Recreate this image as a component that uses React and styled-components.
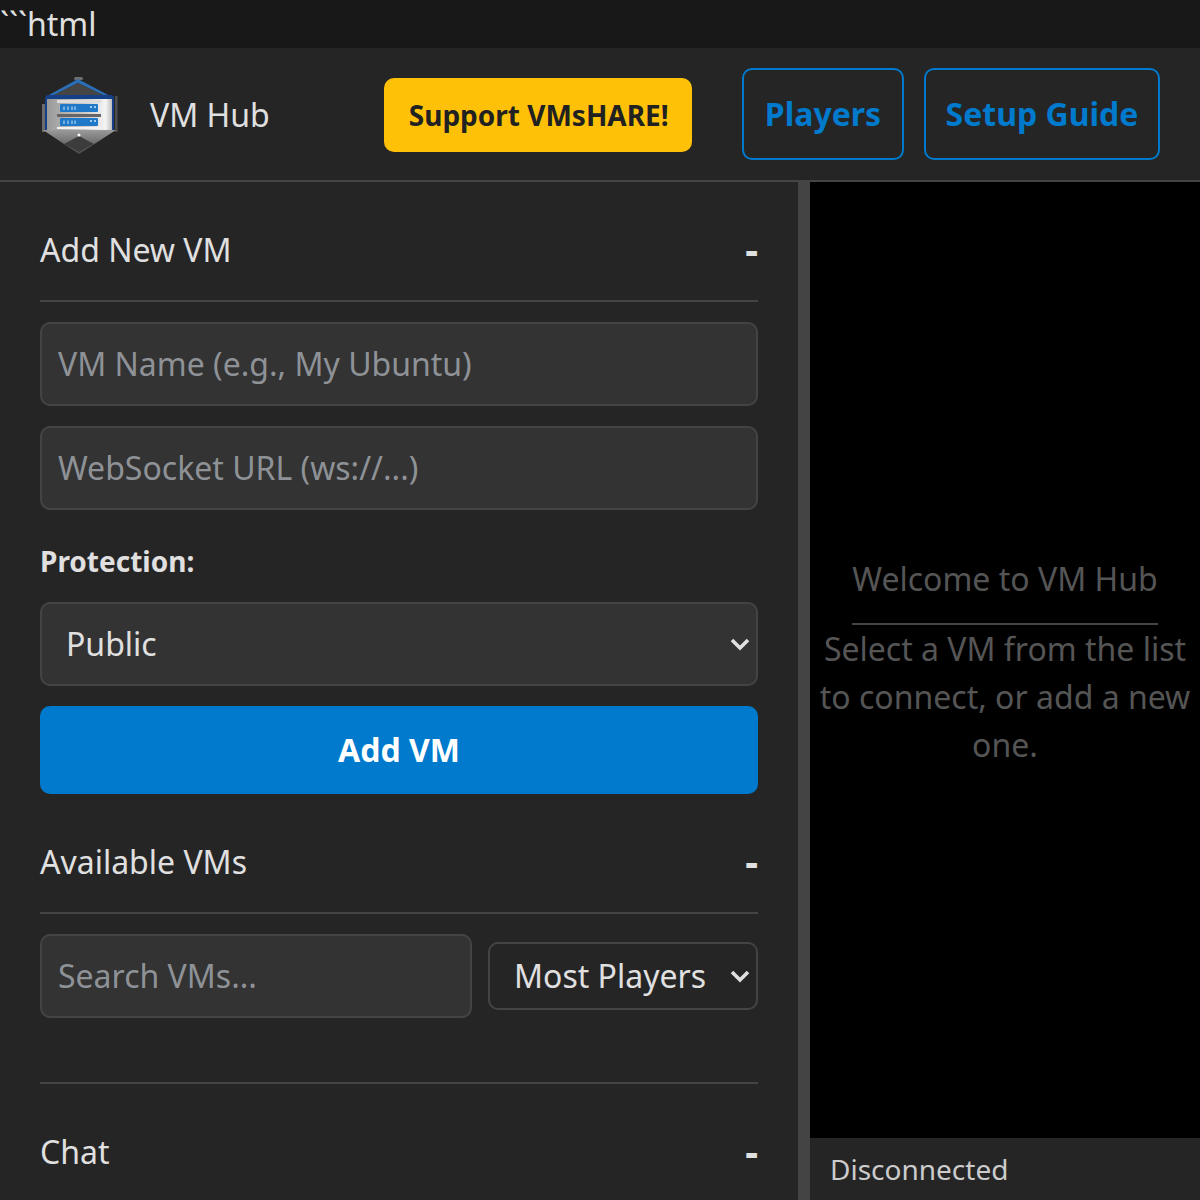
import styled, { createGlobalStyle } from "styled-components";

const GlobalStyle = createGlobalStyle`
  html, body {
    margin: 0;
    height: 100%;
    background: #181818;
  }
  body {
    font-family: "Noto Sans", "Open Sans", sans-serif;
    color: #e0e0e0;
    overflow: hidden;
  }
  * {
    box-sizing: border-box;
  }
`;

const Page = styled.div`
  display: flex;
  flex-direction: column;
  height: 1200px;
  overflow: hidden;
`;

const Stray = styled.div`
  height: 48px;
  font-size: 32px;
  line-height: 48px;
  flex-shrink: 0;
`;

const Header = styled.header`
  display: flex;
  align-items: center;
  height: 134px;
  padding: 0 40px;
  background: #252526;
  border-bottom: 2px solid #444;
  flex-shrink: 0;
`;

const Logo = styled.svg`
  width: 80px;
  height: 80px;
  flex-shrink: 0;
`;

const Title = styled.div`
  margin-left: 30px;
  font-size: 32px;
  color: #e0e0e0;
`;

const SupportButton = styled.a`
  display: flex;
  align-items: center;
  justify-content: center;
  width: 308px;
  height: 74px;
  margin: 2px 0 0 114px;
  padding-left: 2px;
  background: #ffc107;
  color: #212121;
  border-radius: 10px;
  font-size: 28px;
  font-weight: 700;
`;

const Nav = styled.nav`
  display: flex;
  gap: 20px;
  margin-left: auto;
`;

const NavButton = styled.a`
  display: flex;
  align-items: center;
  justify-content: center;
  width: ${(p) => p.$width}px;
  height: 92px;
  padding-bottom: 2px;
  border: 2px solid #007acc;
  border-radius: 10px;
  color: #007acc;
  font-size: 32px;
  font-weight: 700;
`;

const Main = styled.div`
  display: flex;
  flex: 1;
  min-height: 0;
`;

const Sidebar = styled.aside`
  width: 798px;
  padding: 0 40px;
  background: #252526;
  overflow: hidden;
  flex-shrink: 0;
`;

const Resizer = styled.div`
  width: 12px;
  background: #444;
  flex-shrink: 0;
`;

const SectionHead = styled.div`
  display: flex;
  align-items: center;
  justify-content: space-between;
  height: ${(p) => (p.$open ? 120 : 134)}px;
  padding-top: ${(p) => (p.$open ? 16 : 0)}px;
  border-bottom: ${(p) => (p.$open ? "2px solid #444" : "none")};
  font-size: 32px;
`;

const Toggle = styled.span`
  font-size: 40px;
  font-weight: 700;
  line-height: 48px;
`;

const Fields = styled.div`
  display: flex;
  flex-direction: column;
  gap: 20px;
  padding-top: 20px;
`;

const TextInput = styled.input`
  width: 100%;
  height: 84px;
  padding: 0 16px 1px;
  background: #333;
  border: 2px solid #444;
  border-radius: 10px;
  color: #e0e0e0;
  font: inherit;
  font-size: 32px;

  &::placeholder {
    color: #8e9297;
    opacity: 1;
  }
`;

const Label = styled.label`
  display: block;
  height: 37px;
  margin-top: 15px;
  font-size: 28px;
  line-height: 32px;
  font-weight: 700;
`;

const SelectWrap = styled.div`
  position: relative;
  flex: ${(p) => (p.$small ? "0 0 270px" : "none")};
`;

const Select = styled.select`
  display: block;
  width: 100%;
  height: ${(p) => (p.$small ? 68 : 84)}px;
  padding: 0 24px 2px;
  appearance: none;
  background: ${(p) => (p.$small ? "#252526" : "#333")};
  border: 2px solid #444;
  border-radius: 10px;
  color: #e0e0e0;
  font: inherit;
  font-size: 32px;
`;

const Chevron = styled.svg`
  position: absolute;
  top: 50%;
  right: 8px;
  width: 20px;
  height: 14px;
  margin-top: -7px;
  pointer-events: none;
`;

const AddButton = styled.button`
  height: 88px;
  padding-bottom: 3px;
  background: #007acc;
  border: none;
  border-radius: 10px;
  color: #fff;
  font: inherit;
  font-size: 32px;
  font-weight: 700;
`;

const SearchRow = styled.div`
  display: flex;
  align-items: center;
  gap: 16px;
  padding-top: 20px;
  padding-bottom: 64px;
  border-bottom: 2px solid #444;
`;

const Screen = styled.section`
  display: flex;
  flex-direction: column;
  flex: 1;
  min-width: 0;
`;

const Welcome = styled.div`
  display: flex;
  flex: 1;
  flex-direction: column;
  align-items: center;
  justify-content: center;
  padding-top: 3px;
  background: #000;
  color: #555;
  font-size: 32px;
  line-height: 48px;
  text-align: center;
`;

const WelcomeTitle = styled.div`
  padding-bottom: 20px;
  border-bottom: 2px solid #444;
`;

const Status = styled.div`
  display: flex;
  align-items: center;
  height: 62px;
  padding: 0 20px;
  background: #252526;
  color: #ccc;
  font-size: 28px;
`;

function ArrowIcon() {
  return (
    <Chevron viewBox="0 0 20 14">
      <path d="M2 3 L10 11 L18 3" fill="none" stroke="#e0e0e0" strokeWidth="3.6" />
    </Chevron>
  );
}

function VmLogo() {
  return (
    <Logo viewBox="0 0 80 80">
      <defs>
        <linearGradient id="silver" x1="0" y1="0" x2="1" y2="0">
          <stop offset="0" stopColor="#9a9a9a" />
          <stop offset="0.55" stopColor="#c8c8c8" />
          <stop offset="0.9" stopColor="#f4f4f4" />
          <stop offset="1" stopColor="#bdbdbd" />
        </linearGradient>
        <linearGradient id="base" x1="0" y1="0" x2="0" y2="1">
          <stop offset="0" stopColor="#9a9a9a" />
          <stop offset="1" stopColor="#4a4a4a" />
        </linearGradient>
      </defs>
      <g style={{ filter: "blur(0.6px)" }}>
        <rect x="2" y="30" width="3" height="28" fill="#6a6a6a" />
        <rect x="75" y="22" width="2.5" height="36" fill="#4e4e4e" />
        <rect x="34" y="3" width="9" height="3" rx="1.5" fill="#6e6e6e" />
        <path d="M7 22 L38 5 L70 22 L65 22 L38 9 L12 22 Z" fill="#2a6fb5" />
        <path d="M12 22 L38 9 L65 22 Z" fill="#454545" />
        <path d="M3 56 L76 56 L39 80 Z" fill="url(#base)" />
        <path d="M24 70 L39 62 L54 70 L39 78 Z" fill="#3c3c3c" />
        <path d="M5 56 L5 25 Q5 21 9 21 L71 21 Q74 21 74 25 L74 56 Z" fill="#163f88" />
        <rect x="7" y="25" width="65" height="31" fill="url(#silver)" />
        <rect x="17" y="26" width="44" height="3" fill="#dcdcdc" />
        <rect x="20" y="30" width="38" height="8" rx="1" fill="#1f78c8" />
        <rect x="17" y="40" width="44" height="3" fill="#666" />
        <rect x="20" y="44" width="38" height="8" rx="1" fill="#1f78c8" />
        <rect x="17" y="53" width="44" height="2" fill="#f2f2f2" />
        <path d="M24 32.5 v3.5 M28 32.5 v3.5 M32 32.5 v3.5 M35 32.5 v3.5 M24 46.5 v3.5 M28 46.5 v3.5 M32 46.5 v3.5 M35 46.5 v3.5" stroke="#a9d4f3" strokeWidth="1.2" />
        <path d="M50 33 h2 M54 33 h2 M50 47 h2 M54 47 h2" stroke="#cfe8fb" strokeWidth="1.4" />
        <rect x="37.5" y="59.5" width="3" height="3" rx="1.5" fill="#fff" />
      </g>
    </Logo>
  );
}

export default function App() {
  return (
    <>
      <GlobalStyle />
      <Page>
        <Stray>```html</Stray>
        <Header>
          <VmLogo />
          <Title>VM Hub</Title>
          <SupportButton>Support VMsHARE!</SupportButton>
          <Nav>
            <NavButton $width={162}>Players</NavButton>
            <NavButton $width={236}>Setup Guide</NavButton>
          </Nav>
        </Header>
        <Main>
          <Sidebar>
            <SectionHead $open>
              <span>Add New VM</span>
              <Toggle>-</Toggle>
            </SectionHead>
            <Fields>
              <TextInput placeholder="VM Name (e.g., My Ubuntu)" />
              <TextInput placeholder="WebSocket URL (ws://...)" />
              <Label>Protection:</Label>
              <SelectWrap>
                <Select defaultValue="public">
                  <option value="public">Public</option>
                </Select>
                <ArrowIcon />
              </SelectWrap>
              <AddButton>Add VM</AddButton>
            </Fields>
            <SectionHead $open>
              <span>Available VMs</span>
              <Toggle>-</Toggle>
            </SectionHead>
            <SearchRow>
              <TextInput placeholder="Search VMs..." />
              <SelectWrap $small>
                <Select $small defaultValue="most">
                  <option value="most">Most Players</option>
                </Select>
                <ArrowIcon />
              </SelectWrap>
            </SearchRow>
            <SectionHead>
              <span>Chat</span>
              <Toggle>-</Toggle>
            </SectionHead>
          </Sidebar>
          <Resizer />
          <Screen>
            <Welcome>
              <WelcomeTitle>Welcome to VM Hub</WelcomeTitle>
              <div>Select a VM from the list to connect, or add a new one.</div>
            </Welcome>
            <Status>Disconnected</Status>
          </Screen>
        </Main>
      </Page>
    </>
  );
}
